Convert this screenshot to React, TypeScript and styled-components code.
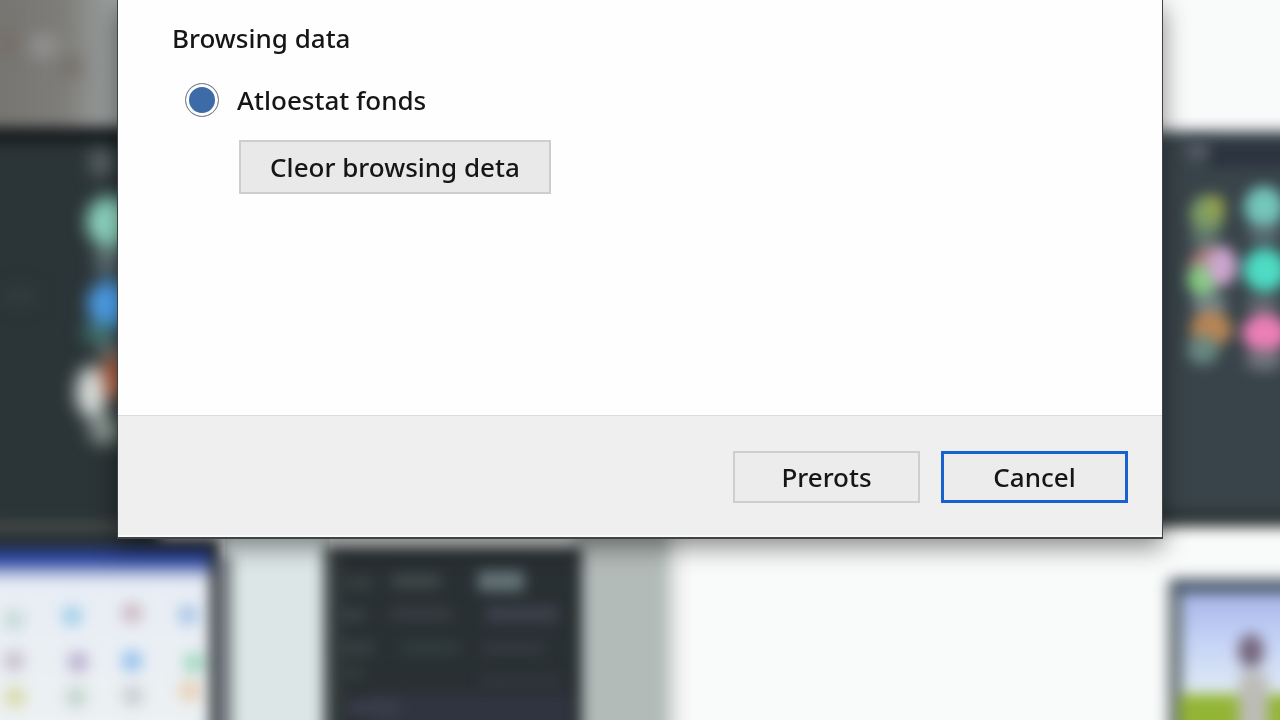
import React from "react";
import styled, { createGlobalStyle } from "styled-components";

const GlobalStyle = createGlobalStyle`
  *, *::before, *::after { box-sizing: border-box; }
  body {
    margin: 0;
    overflow: hidden;
    background: #f3f5f5;
    color: #161616;
    font-family: "Noto Sans", "Open Sans", sans-serif;
    font-size: 26px;
    line-height: 36px;
  }
`;

const Page = styled.div`
  position: relative;
  min-height: 100vh;
  padding: 0 117px;
`;

const BackdropArt = styled.svg`
  position: fixed;
  inset: 0;
  width: 100%;
  height: 100%;
`;

const Dialog = styled.main`
  position: relative;
  display: flex;
  flex-direction: column;
  border: 1px solid #3f4343;
  border-top: 0;
  border-bottom-width: 2px;
  background: #fefefe;
  box-shadow: 0 8px 24px rgba(0, 0, 0, 0.45);
`;

const DialogBody = styled.section`
  display: flex;
  flex-direction: column;
  align-items: flex-start;
  min-height: 415px;
  padding: 20px 54px;
`;

const Heading = styled.h1`
  margin: 0;
  font-size: 26px;
  font-weight: 500;
  line-height: 36px;
`;

const Option = styled.label`
  display: flex;
  align-items: center;
  gap: 18px;
  margin: 26px 0 22px 13px;
  font-weight: 500;
`;

const Radio = styled.input`
  appearance: none;
  width: 34px;
  height: 34px;
  margin: 0;
  border: 1px solid #85878b;
  border-radius: 50%;
  background: #3c6ba8;
  box-shadow: inset 0 0 0 3px #fdfdfd;
`;

const Button = styled.button<{ $primary?: boolean; $wide?: boolean }>`
  width: ${(p) => (p.$wide ? "312px" : "187px")};
  height: ${(p) => (p.$wide ? "54px" : "52px")};
  padding: 0;
  border: ${(p) => (p.$primary ? "3px solid #1762cf" : "2px solid #cecece")};
  background: ${(p) => (p.$wide ? "#e9e9e9" : "#ececec")};
  color: inherit;
  font: inherit;
  font-weight: 500;
`;

const Indented = styled.div`
  padding-left: 67px;
`;

const DialogFooter = styled.footer`
  display: flex;
  justify-content: flex-end;
  gap: 21px;
  padding: 35px 34px 32px;
  border-top: 1px solid #dcdcdc;
  border-bottom: 2px solid #fafafa;
  background: #efefef;
`;

const palePoints: [number, number, string][] = [
  [14, 620, "#c9dbd8"], [72, 616, "#aad2ec"], [132, 613, "#d0bfc8"], [188, 615, "#b0cae6"],
  [14, 661, "#cbc4d0"], [78, 662, "#beb6d3"], [132, 661, "#9bc5ee"], [194, 663, "#a8dac4"],
  [15, 697, "#dadcae"], [76, 697, "#c7d6cf"], [133, 696, "#cbd0d4"], [190, 691, "#e8d2ba"],
];

const codeLines: [number, number, number, number, string][] = [
  [345, 578, 28, 10, "#3b4544"], [392, 575, 48, 12, "#454e4d"], [478, 571, 46, 20, "#66757a"],
  [340, 610, 26, 10, "#3e4648"], [390, 609, 62, 10, "#3a4145"], [486, 607, 72, 14, "#3f4450"],
  [338, 642, 36, 12, "#3a4344"], [400, 643, 60, 10, "#34403f"], [482, 644, 62, 9, "#383e45"],
  [342, 668, 22, 10, "#37403a"], [482, 678, 78, 8, "#363944"], [346, 700, 54, 16, "#3b3d4b"],
];

function Backdrop() {
  return (
    <BackdropArt viewBox="0 0 1280 720" preserveAspectRatio="xMidYMid slice" aria-hidden="true">
      <defs>
        <filter id="soft" x="-30%" y="-30%" width="160%" height="160%" colorInterpolationFilters="sRGB">
          <feGaussianBlur stdDeviation="7" />
        </filter>
        <filter id="glow" x="-80%" y="-80%" width="260%" height="260%" colorInterpolationFilters="sRGB">
          <feGaussianBlur stdDeviation="9" />
        </filter>
        <linearGradient id="wall" x1="0" x2="1" y1="0" y2="0">
          <stop offset="0" stopColor="#73726e" />
          <stop offset="0.5" stopColor="#7e7d7a" />
          <stop offset="0.78" stopColor="#a0a5a5" />
          <stop offset="1" stopColor="#a0a5a5" />
        </linearGradient>
        <linearGradient id="sheet" x1="0" x2="0" y1="0" y2="1">
          <stop offset="0" stopColor="#203b94" />
          <stop offset="0.05" stopColor="#4a61ae" />
          <stop offset="0.13" stopColor="#e8edf5" />
          <stop offset="1" stopColor="#edf2f1" />
        </linearGradient>
        <linearGradient id="sky" x1="0" x2="0" y1="0" y2="1">
          <stop offset="0" stopColor="#a9b6ea" />
          <stop offset="0.45" stopColor="#c5d3f6" />
          <stop offset="1" stopColor="#e2edf4" />
        </linearGradient>
      </defs>

      <rect width="1280" height="720" fill="#f9fafa" />
      <g filter="url(#soft)">
        <rect x="-30" y="-30" width="190" height="163" fill="url(#wall)" />
        <rect x="-30" y="127" width="190" height="440" fill="#2b3436" />
        <rect x="-30" y="128" width="190" height="14" fill="#131819" />
        <rect x="-10" y="523" width="150" height="10" fill="#4b4f4b" />
        <rect x="1135" y="131" width="185" height="396" fill="#39444a" />
        <rect x="1205" y="143" width="130" height="24" fill="#2b333f" />
        <rect x="1140" y="510" width="180" height="17" fill="#2d3536" />
      </g>

      <g filter="url(#glow)">
        <ellipse cx="44" cy="46" rx="16" ry="12" fill="#929291" />
        <ellipse cx="72" cy="67" rx="9" ry="10" fill="#706961" />
        <ellipse cx="10" cy="43" rx="10" ry="10" fill="#776b63" />
        <ellipse cx="102" cy="163" rx="12" ry="14" fill="#60696c" />
        <ellipse cx="111" cy="222" rx="24" ry="26" fill="#92dcc6" />
        <ellipse cx="109" cy="261" rx="14" ry="14" fill="#66777b" />
        <ellipse cx="112" cy="304" rx="24" ry="24" fill="#4fa5f2" />
        <ellipse cx="100" cy="333" rx="18" ry="10" fill="#427773" />
        <ellipse cx="112" cy="351" rx="14" ry="9" fill="#717b7b" />
        <ellipse cx="92" cy="392" rx="16" ry="26" fill="#d9dfdd" />
        <ellipse cx="117" cy="377" rx="15" ry="22" fill="#b0603f" />
        <ellipse cx="105" cy="430" rx="16" ry="15" fill="#8c9994" />
        <ellipse cx="20" cy="296" rx="18" ry="8" fill="#343e3f" />
      </g>

      <g filter="url(#soft)">
        <ellipse cx="1198" cy="151" rx="12" ry="9" fill="#565b67" />
        <ellipse cx="1207" cy="215" rx="17" ry="20" fill="#7c9c68" />
        <ellipse cx="1215" cy="207" rx="10" ry="12" fill="#95a350" />
        <ellipse cx="1205" cy="238" rx="15" ry="10" fill="#5d746d" />
        <ellipse cx="1264" cy="207" rx="20" ry="21" fill="#74c6bc" />
        <ellipse cx="1264" cy="234" rx="16" ry="10" fill="#5b6d74" />
        <ellipse cx="1211" cy="267" rx="22" ry="21" fill="#a97a7c" />
        <ellipse cx="1203" cy="280" rx="16" ry="16" fill="#86cb82" />
        <ellipse cx="1222" cy="266" rx="15" ry="20" fill="#cda6cf" />
        <ellipse cx="1209" cy="304" rx="18" ry="11" fill="#74848a" />
        <ellipse cx="1265" cy="270" rx="22" ry="22" fill="#4edbc4" />
        <ellipse cx="1263" cy="305" rx="17" ry="10" fill="#63686f" />
        <ellipse cx="1211" cy="329" rx="21" ry="18" fill="#b88555" />
        <ellipse cx="1203" cy="350" rx="16" ry="15" fill="#688780" />
        <ellipse cx="1265" cy="333" rx="23" ry="19" fill="#ec7fb6" />
        <ellipse cx="1264" cy="360" rx="19" ry="11" fill="#70737b" />
      </g>

      <rect x="225" y="536" width="105" height="184" fill="#dce6e6" />
      <g filter="url(#soft)">
        <rect x="660" y="530" width="20" height="240" fill="#dfe4e2" />
        <rect x="-30" y="538" width="250" height="225" fill="#2b3134" />
        <rect x="216" y="556" width="16" height="210" fill="#737980" />
        <rect x="575" y="525" width="93" height="240" fill="#b3bbb9" />
        <rect x="324" y="546" width="258" height="224" rx="4" fill="#293033" />
        <rect x="327" y="550" width="12" height="210" fill="#3a4342" />
        <rect x="370" y="694" width="200" height="50" fill="#303440" />
      </g>
      <g filter="url(#soft)">
        <rect x="-20" y="551" width="230" height="230" fill="url(#sheet)" />
        <rect x="-20" y="549" width="230" height="13" fill="#253f97" />
        {palePoints.map(([cx, cy, fill]) => (
          <ellipse key={`${cx}-${cy}`} cx={cx} cy={cy} rx="11" ry="11" fill={fill} />
        ))}
        {codeLines.map(([x, y, width, height, fill]) => (
          <rect key={`${x}-${y}`} x={x} y={y} width={width} height={height} fill={fill} />
        ))}
      </g>

      <g filter="url(#soft)">
        <rect x="1168" y="578" width="160" height="190" rx="5" fill="#6a7478" />
        <rect x="1174" y="580" width="146" height="15" fill="#515f73" />
        <rect x="1182" y="594" width="130" height="106" fill="url(#sky)" />
        <rect x="1179" y="694" width="130" height="60" fill="#93b535" />
        <rect x="1239" y="672" width="29" height="80" rx="8" fill="#bdbcb8" />
        <ellipse cx="1251" cy="651" rx="13" ry="17" fill="#75667c" />
      </g>
    </BackdropArt>
  );
}

export default function App() {
  return (
    <>
      <GlobalStyle />
      <Page>
        <Backdrop />
        <Dialog>
          <DialogBody>
            <Heading>Browsing data</Heading>
            <Option>
              <Radio type="radio" name="data-option" defaultChecked />
              Atloestat fonds
            </Option>
            <Indented>
              <Button type="button" $wide>Cleor browsing deta</Button>
            </Indented>
          </DialogBody>
          <DialogFooter>
            <Button type="button">Prerots</Button>
            <Button type="button" $primary>Cancel</Button>
          </DialogFooter>
        </Dialog>
      </Page>
    </>
  );
}
